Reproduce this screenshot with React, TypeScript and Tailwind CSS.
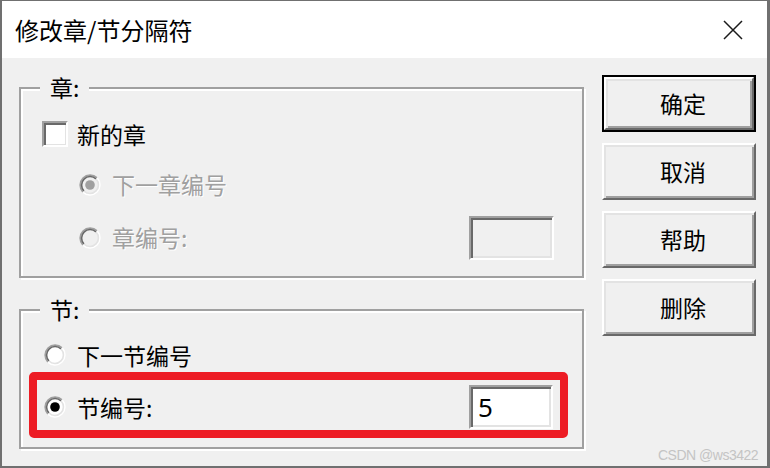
import React from "react";

function Radio({ checked, disabled }: { checked?: boolean; disabled?: boolean }) {
  const fill = disabled ? "#f0f0f0" : "#ffffff";
  const dot = disabled ? "#a0a0a0" : "#000000";
  return (
    <svg width="22" height="22" viewBox="0 0 22 22" className="shrink-0">
      <circle cx="11" cy="11" r="9.5" fill={fill} />
      <path d="M3.93 18.07 A10 10 0 0 1 18.07 3.93" fill="none" stroke="#a0a0a0" strokeWidth="1.6" />
      <path d="M4.99 17.01 A8.5 8.5 0 0 1 17.01 4.99" fill="none" stroke="#696969" strokeWidth="1.6" />
      <path d="M18.07 3.93 A10 10 0 0 1 3.93 18.07" fill="none" stroke="#ffffff" strokeWidth="1.6" />
      <path d="M17.01 4.99 A8.5 8.5 0 0 1 4.99 17.01" fill="none" stroke="#e3e3e3" strokeWidth="1.6" />
      {checked && <circle cx="11" cy="11" r="4.8" fill={dot} />}
    </svg>
  );
}

function Group({
  label,
  className,
  children,
}: {
  label: string;
  className: string;
  children: React.ReactNode;
}) {
  return (
    <div
      className={`relative w-[565px] border-2 border-[#a0a0a0] shadow-[inset_2px_2px_0_#ffffff,2px_2px_0_#ffffff] ${className}`}
    >
      <div className="absolute left-[19px] -top-[14px] h-[24px] px-[10px] bg-[#f0f0f0] text-[23px] leading-[24px] text-black">
        {label}
      </div>
      {children}
    </div>
  );
}

function Button({ label, isDefault }: { label: string; isDefault?: boolean }) {
  const inner =
    "w-full h-full flex items-center justify-center pl-[8px] border-2 border-t-white border-l-white border-b-[#696969] border-r-[#696969] shadow-[inset_2px_2px_0_#e3e3e3,inset_-2px_-2px_0_#a0a0a0] text-[23px] leading-none text-black";
  if (isDefault) {
    return (
      <div className="w-[154px] h-[57px] border-2 border-black">
        <div className={inner}>{label}</div>
      </div>
    );
  }
  return (
    <div className="w-[154px] h-[57px]">
      <div className={inner}>{label}</div>
    </div>
  );
}

const editCls =
  "h-[44px] border-2 border-t-[#a0a0a0] border-l-[#a0a0a0] border-b-white border-r-white shadow-[inset_2px_2px_0_#696969,inset_-2px_-2px_0_#e3e3e3]";

const disabledText = "text-[#a0a0a0] [text-shadow:1px_1px_0_#ffffff]";

export default function App() {
  return (
    <div className="relative w-[770px] h-[468px] flex flex-col bg-[#f0f0f0] border-l-2 border-r-[3px] border-t border-b-2 border-[#707070] font-['Noto_Sans_CJK_SC',sans-serif] overflow-hidden">
      {/* Title bar */}
      <div className="h-[57px] shrink-0 bg-white flex items-center justify-between pl-[13px] pr-[24px]">
        <span className="text-[24px] leading-none text-black">修改章/节分隔符</span>
        <svg width="20" height="20" viewBox="0 0 20 20">
          <path d="M1 1 L19 19 M19 1 L1 19" stroke="#1a1a1a" strokeWidth="1.5" fill="none" />
        </svg>
      </div>

      {/* Body */}
      <div className="flex flex-1 pl-[17px]">
        <div className="flex flex-col pt-[29px]">
          <Group label="章:" className="h-[191px]">
            <div className="flex flex-col pt-[20px] pl-[21px] pr-[28px]">
              <div className="h-[50px] flex items-center gap-[9px]">
                <div className="w-[26px] h-[26px] bg-white border-2 border-t-[#a0a0a0] border-l-[#a0a0a0] border-b-white border-r-white shadow-[inset_2px_2px_0_#696969,inset_-1px_-1px_0_#e3e3e3]" />
                <span className="text-[23px] leading-none text-black">新的章</span>
              </div>
              <div className="h-[51px] flex items-center gap-[11px] pl-[37px]">
                <Radio checked disabled />
                <span className={`text-[23px] leading-none ${disabledText}`}>下一章编号</span>
              </div>
              <div className="h-[55px] flex items-center justify-between pl-[37px]">
                <div className="flex items-center gap-[11px]">
                  <Radio disabled />
                  <span className={`text-[23px] leading-none ${disabledText}`}>章编号:</span>
                </div>
                <div className={`${editCls} w-[85px] bg-[#f0f0f0]`} />
              </div>
            </div>
          </Group>

          <Group label="节:" className="h-[140px] mt-[31px]">
            <div className="flex flex-col pt-[18px] pl-[23px] pr-[29px]">
              <div className="h-[52px] flex items-center gap-[11px]">
                <Radio />
                <span className="text-[23px] leading-none text-black">下一节编号</span>
              </div>
              <div className="h-[52px] flex items-center justify-between">
                <div className="flex items-center gap-[11px]">
                  <Radio checked />
                  <span className="text-[23px] leading-none text-black">节编号:</span>
                </div>
                <div className={`${editCls} w-[84px] bg-white flex items-center pl-[7px]`}>
                  <span className="text-[26px] leading-none text-black font-['Noto_Sans',sans-serif]">5</span>
                </div>
              </div>
            </div>
          </Group>
        </div>

        <div className="flex flex-col gap-[11px] pt-[17px] ml-[18px]">
          <Button label="确定" isDefault />
          <Button label="取消" />
          <Button label="帮助" />
          <Button label="删除" />
        </div>
      </div>

      {/* Red highlight overlay */}
      <div className="absolute left-[27px] top-[371px] w-[539px] h-[66px] border-[8px] border-[#ed1c24] rounded-[5px] pointer-events-none" />

      {/* Watermark */}
      <div className="absolute left-[656px] top-[445px] text-[14px] leading-[18px] tracking-[-0.5px] text-[#c4c4c4] font-['Liberation_Sans',sans-serif]">
        CSDN @ws3422
      </div>
    </div>
  );
}
